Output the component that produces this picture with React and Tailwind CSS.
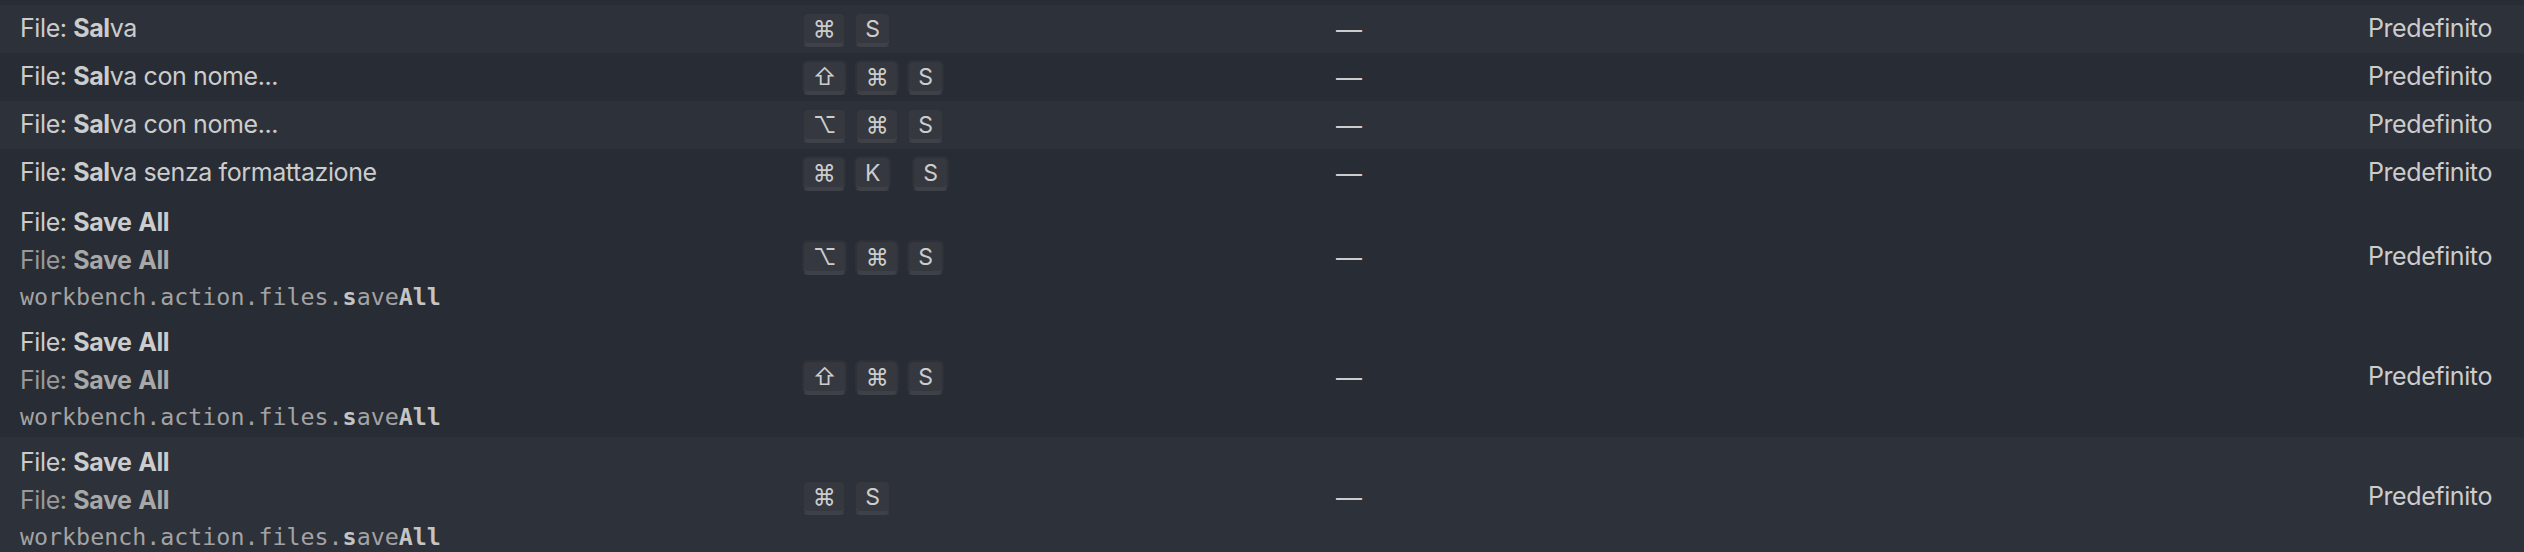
// Keyboard shortcuts list (VS Code style, One Dark colours)
const LIGHT = 'bg-[#2c313a]';
const DARK = 'bg-[#282c34]';

const ROWS = [
  { bg: LIGHT, label: [['File: ', 0], ['Sal', 1], ['va', 0]], keys: [['⌘', 'S']] },
  { bg: DARK, label: [['File: ', 0], ['Sal', 1], ['va con nome...', 0]], keys: [['⇧', '⌘', 'S']] },
  { bg: LIGHT, label: [['File: ', 0], ['Sal', 1], ['va con nome...', 0]], keys: [['⌥', '⌘', 'S']] },
  { bg: DARK, label: [['File: ', 0], ['Sal', 1], ['va senza formattazione', 0]], keys: [['⌘', 'K'], ['S']] },
  { bg: DARK, multi: true, keys: [['⌥', '⌘', 'S']] },
  { bg: DARK, multi: true, keys: [['⇧', '⌘', 'S']] },
  { bg: LIGHT, multi: true, keys: [['⌘', 'S']] },
];

const KEY_W = { '⌘': 'w-[44px]', '⇧': 'w-[45px]', '⌥': 'w-[45px]', S: 'w-[37px]', K: 'w-[37px]' };

function Key({ k }) {
  return (
    <span
      className={`${KEY_W[k]} h-[35px] mx-[4px] flex items-center justify-center rounded-[6px] bg-[#35383f] border-2 border-[#2e3137] border-b-[#3e4148] shadow-[inset_0_-2px_0_#3e4148] text-[23px] text-[#cccccc] font-['Inter','DejaVu_Sans',sans-serif]`}
    >
      {k}
    </span>
  );
}

function Segs({ parts, bold = 'font-bold' }) {
  return parts.map(([t, b], i) => (
    <span key={i} className={b ? bold : ''}>
      {t}
    </span>
  ));
}

function Label({ row }) {
  if (!row.multi) {
    return (
      <div className="text-[#cccccc] whitespace-pre">
        <Segs parts={row.label} />
      </div>
    );
  }
  return (
    <div className="pt-[4px] whitespace-pre">
      <div className="leading-[38px] text-[#cccccc]">
        <Segs parts={[['File: ', 0], ['Save', 1], [' ', 0], ['All', 1]]} />
      </div>
      <div className="leading-[38px] text-[#999999]">
        <Segs parts={[['File: ', 0], ['Save', 1], [' ', 0], ['All', 1]]} bold="font-bold text-[#a8a8a8]" />
      </div>
      <div className="leading-[36px] tracking-normal text-[23.3px] text-[#a3a3a3] font-['DejaVu_Sans_Mono',monospace]">
        <Segs parts={[['workbench.action.files.', 0], ['s', 1], ['ave', 0], ['All', 1]]} bold="font-bold text-[#c4c4c4]" />
      </div>
    </div>
  );
}

export default function App() {
  return (
    <div className="w-[2524px] h-[552px] overflow-hidden bg-[#282c34] font-['Inter','Liberation_Sans',sans-serif] text-[25px] tracking-[-0.4px]">
      <div className={`h-[5px] ${DARK}`} />
      {ROWS.map((row, i) => (
        <div key={i} className={`flex items-center ${row.bg} ${row.multi ? 'h-[120px]' : 'h-[48px]'}`}>
          <div className="w-[798px] pl-[20px] shrink-0">
            <Label row={row} />
          </div>
          <div className="w-[538px] shrink-0 flex items-center">
            {row.keys.map((chord, j) => (
              <div key={j} className={`flex items-center ${j > 0 ? 'ml-[13px]' : ''}`}>
                {chord.map((k) => (
                  <Key key={k} k={k} />
                ))}
              </div>
            ))}
          </div>
          <div className="flex-1 text-[#cccccc] text-[26px]">—</div>
          <div className="pr-[32px] text-[#cccccc]">Predefinito</div>
        </div>
      ))}
    </div>
  );
}
